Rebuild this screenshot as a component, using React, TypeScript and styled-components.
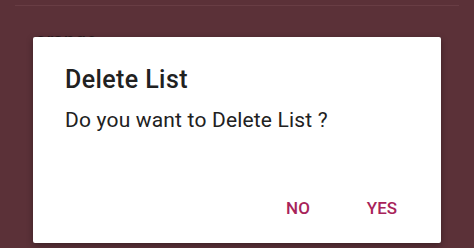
import React from 'react';
import styled, { createGlobalStyle } from 'styled-components';

const GlobalStyle = createGlobalStyle`
  html, body {
    margin: 0;
    padding: 0;
    background: #5b3138;
  }
  * {
    box-sizing: border-box;
  }
`;

const Screen = styled.div`
  position: relative;
  width: 474px;
  height: 248px;
  overflow: hidden;
  background: #5b3138;
  font-family: Roboto, 'Noto Sans', sans-serif;
`;

const Backdrop = styled.div`
  display: flex;
  flex-direction: column;
  padding: 5px 15px 0 15px;
`;

const Divider = styled.div`
  height: 1px;
  background: #683d44;
`;

const ListItem = styled.div`
  padding: 22px 0 0 20px;
  font-size: 20px;
  line-height: 24px;
  color: #2a181c;
`;

const Dialog = styled.div`
  position: absolute;
  left: 33px;
  top: 37px;
  width: 408px;
  height: 206px;
  background: #ffffff;
  border-radius: 2px;
  box-shadow: 0 2px 6px rgba(0, 0, 0, 0.35);
  display: flex;
  flex-direction: column;
  padding: 28px 0 17px 32px;
`;

const Title = styled.h2`
  margin: 0;
  font-size: 25px;
  line-height: 30px;
  font-weight: 500;
  letter-spacing: 0.4px;
  color: #212121;
`;

const Message = styled.p`
  margin: 13px 0 0 0;
  font-size: 21px;
  line-height: 25px;
  font-weight: 400;
  letter-spacing: 0.18px;
  color: #212121;
`;

const Actions = styled.div`
  margin-top: auto;
  display: flex;
  justify-content: flex-end;
  gap: 20px;
  padding-right: 27px;
`;

const TextButton = styled.button`
  min-width: 64px;
  height: 36px;
  padding: 0 8px;
  border: none;
  background: transparent;
  font-family: Roboto, 'Noto Sans', sans-serif;
  font-size: 17px;
  line-height: 36px;
  font-weight: 500;
  color: #a8235a;
  text-align: center;
  cursor: pointer;
`;

export default function App() {
  return (
    <>
      <GlobalStyle />
      <Screen>
        <Backdrop>
          <Divider />
          <ListItem>orange</ListItem>
        </Backdrop>
        <Dialog>
          <Title>Delete List</Title>
          <Message>Do you want to Delete List ?</Message>
          <Actions>
            <TextButton>NO</TextButton>
            <TextButton>YES</TextButton>
          </Actions>
        </Dialog>
      </Screen>
    </>
  );
}
